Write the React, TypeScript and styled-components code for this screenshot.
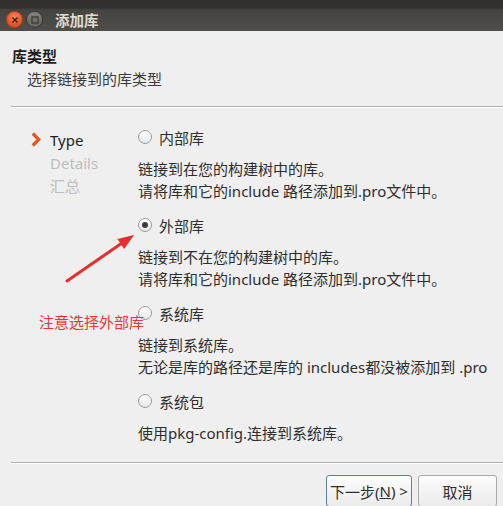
import React from "react";
import styled, { createGlobalStyle } from "styled-components";

const GlobalStyle = createGlobalStyle`
  html, body { margin: 0; padding: 0; background: #efefef; }
  body {
    font-family: "Noto Sans", "Noto Sans CJK SC", sans-serif;
    font-size: 15px;
    color: #3c3c3c;
    overflow: hidden;
  }
`;

const Window = styled.div`
  position: relative;
  width: 503px;
  height: 506px;
  display: flex;
  flex-direction: column;
  overflow: hidden;
  background: #efefef;
`;

const TitleBar = styled.div`
  height: 31px;
  flex: none;
  display: flex;
  align-items: center;
  padding: 8px 0 0 6px;
  box-sizing: border-box;
  background: linear-gradient(to bottom, #2e2d2a 0px, #34332f 8px, #45433f 10px, #504e49 31px);
`;

const WinButton = styled.div<{ $close?: boolean }>`
  width: 17px;
  height: 17px;
  border-radius: 50%;
  box-sizing: border-box;
  display: flex;
  align-items: center;
  justify-content: center;
  margin-right: ${(p) => (p.$close ? "3px" : "0")};
  border: 1px solid ${(p) => (p.$close ? "#b8401c" : "#3a3935")};
  background: ${(p) =>
    p.$close
      ? "radial-gradient(circle at 50% 35%, #f58a5c 0%, #e4572a 60%, #cf4820 100%)"
      : "linear-gradient(to bottom, #85837c, #64625c)"};
`;

const TitleText = styled.div`
  margin-left: 12px;
  font-family: "Noto Sans CJK SC", sans-serif;
  font-weight: 700;
  font-size: 14.5px;
  color: #dfdbd2;
  line-height: 20px;
`;

const Body = styled.div`
  flex: 1;
  display: flex;
  flex-direction: column;
  min-height: 0;
`;

const Header = styled.div`
  padding: 15px 0 0 12px;
`;

const HeaderTitle = styled.div`
  font-family: "Noto Sans CJK SC", sans-serif;
  font-weight: 700;
  font-size: 15px;
  line-height: 20px;
  color: #1e1e1e;
`;

const HeaderSub = styled.div`
  margin-top: 3px;
  padding-left: 15px;
  font-family: "Noto Sans CJK SC", sans-serif;
  line-height: 20px;
  color: #3c3c3c;
`;

const Separator = styled.div<{ $top?: number }>`
  margin-top: ${(p) => p.$top ?? 0}px;
  margin-left: 11px;
  height: 1px;
  background: #b1b1b1;
  border-bottom: 1px solid #ffffff;
  flex: none;
`;

const Main = styled.div`
  flex: 1;
  display: flex;
  min-height: 0;
`;

const Nav = styled.div`
  width: 138px;
  flex: none;
  box-sizing: border-box;
  padding: 20px 0 0 31px;
  display: flex;
  flex-direction: column;
`;

const NavItem = styled.div<{ $active?: boolean }>`
  display: flex;
  align-items: center;
  height: 23px;
  color: ${(p) => (p.$active ? "#1e1e1e" : "#bdbdbd")};
  font-family: "Noto Sans", "Noto Sans CJK SC", sans-serif;
  font-size: 15px;
`;

const NavMarker = styled.span`
  width: 10px;
  margin-right: 9px;
  display: flex;
  align-items: center;
`;

const Options = styled.div`
  padding-top: 18px;
  display: flex;
  flex-direction: column;
  gap: 12px;
`;

const Option = styled.div`
  display: flex;
  flex-direction: column;
`;

const RadioRow = styled.label`
  height: 22px;
  display: flex;
  align-items: center;
  gap: 7px;
  color: #2e2e2e;
  font-family: "Noto Sans CJK SC", sans-serif;
`;

const RadioCircle = styled.span<{ $checked?: boolean }>`
  width: 14px;
  height: 14px;
  box-sizing: border-box;
  border-radius: 50%;
  border: 1px solid #9c9c9c;
  background: linear-gradient(to bottom, #ffffff, #e6e6e6);
  display: flex;
  align-items: center;
  justify-content: center;
  &::after {
    content: "";
    display: ${(p) => (p.$checked ? "block" : "none")};
    width: 6px;
    height: 6px;
    border-radius: 50%;
    background: #3a3a3a;
  }
`;

const Desc = styled.div`
  margin-top: 10px;
  line-height: 22px;
  color: #2e2e2e;
  white-space: nowrap;
`;

const Footer = styled.div`
  flex: none;
  height: 44px;
  display: flex;
  flex-direction: column;
`;

const ButtonRow = styled.div`
  display: flex;
  justify-content: flex-end;
  gap: 6px;
  padding: 11px 6px 0 0;
`;

const Button = styled.button<{ $default?: boolean; $w: number }>`
  width: ${(p) => p.$w}px;
  height: 32px;
  box-sizing: border-box;
  border-radius: 3px;
  border: 1px solid ${(p) => (p.$default ? "#5c7fa8" : "#a9a9a9")};
  background: linear-gradient(to bottom, #fdfdfd, #ebebeb);
  font-family: "Noto Sans", "Noto Sans CJK SC", sans-serif;
  font-size: 15px;
  color: #2e2e2e;
  padding: 0;
  display: flex;
  align-items: center;
  justify-content: center;
  flex: none;
`;

const Annotation = styled.div`
  position: absolute;
  left: 39px;
  top: 312px;
  line-height: 20px;
  font-family: "Noto Sans CJK SC", sans-serif;
  font-size: 15px;
  color: #ec3434;
  white-space: nowrap;
`;

const ArrowSvg = styled.svg`
  position: absolute;
  left: 0;
  top: 0;
  pointer-events: none;
`;

const options = [
  { label: "内部库", lines: ["链接到在您的构建树中的库。", "请将库和它的include 路径添加到.pro文件中。"] },
  { label: "外部库", checked: true, lines: ["链接到不在您的构建树中的库。", "请将库和它的include 路径添加到.pro文件中。"] },
  { label: "系统库", lines: ["链接到系统库。", "无论是库的路径还是库的 includes都没被添加到 .pro"] },
  { label: "系统包", lines: ["使用pkg-config.连接到系统库。"] },
];

export default function App() {
  return (
    <>
      <GlobalStyle />
      <Window>
        <TitleBar>
          <WinButton $close>
            <svg width="8" height="8" viewBox="0 0 8 8">
              <path d="M1.5 1.5 L6.5 6.5 M6.5 1.5 L1.5 6.5" stroke="#3b1a0e" strokeWidth="1.4" />
            </svg>
          </WinButton>
          <WinButton>
            <svg width="8" height="8" viewBox="0 0 8 8">
              <rect x="1" y="1" width="6" height="6" fill="none" stroke="#3a3935" strokeWidth="1.3" />
            </svg>
          </WinButton>
          <TitleText>添加库</TitleText>
        </TitleBar>
        <Body>
          <Header>
            <HeaderTitle>库类型</HeaderTitle>
            <HeaderSub>选择链接到的库类型</HeaderSub>
          </Header>
          <Separator $top={17} />
          <Main>
            <Nav>
              <NavItem $active>
                <NavMarker>
                  <svg width="10" height="15" viewBox="0 0 10 15">
                    <path d="M1.8 1.5 L7.8 7.5 L1.8 13.5" fill="none" stroke="#e0581f" strokeWidth="3.2" strokeLinejoin="miter" />
                  </svg>
                </NavMarker>
                Type
              </NavItem>
              <NavItem>
                <NavMarker />
                Details
              </NavItem>
              <NavItem>
                <NavMarker />
                汇总
              </NavItem>
            </Nav>
            <Options>
              {options.map((o) => (
                <Option key={o.label}>
                  <RadioRow>
                    <RadioCircle $checked={o.checked} />
                    {o.label}
                  </RadioRow>
                  <Desc>
                    {o.lines.map((l) => (
                      <div key={l}>{l}</div>
                    ))}
                  </Desc>
                </Option>
              ))}
            </Options>
          </Main>
          <Footer>
            <Separator />
            <ButtonRow>
              <Button $default $w={86}>
                下一步(<u>N</u>) &gt;
              </Button>
              <Button $w={79}>取消</Button>
            </ButtonRow>
          </Footer>
        </Body>
        <ArrowSvg width="503" height="506" viewBox="0 0 503 506">
          <line x1="67" y1="281" x2="122" y2="243" stroke="#e62e2e" strokeWidth="3" strokeLinecap="round" />
          <polygon points="134,235 124.2,249.1 117.4,239.1" fill="#e62e2e" />
        </ArrowSvg>
        <Annotation>注意选择外部库</Annotation>
      </Window>
    </>
  );
}
